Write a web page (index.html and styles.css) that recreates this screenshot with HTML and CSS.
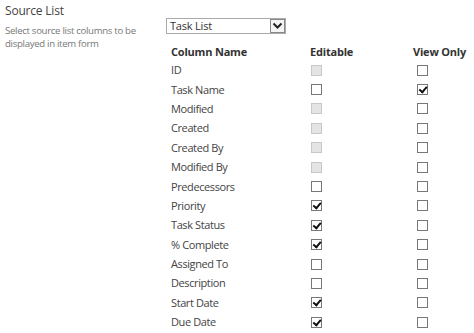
FILE: index.html
```html
<!DOCTYPE html>
<html>
<head>
<meta charset="utf-8">
<link rel="stylesheet" href="styles.css">
</head>
<body>
<div class="page">
  <div class="side">
    <div class="title">Source List</div>
    <div class="desc">Select source list columns to be displayed in item form</div>
  </div>
  <div class="main">
    <div class="select">
      <span class="select-text">Task List</span>
      <span class="select-btn">
        <svg width="11" height="8" viewBox="0 0 11 8"><path d="M1.5 1.5 L5.5 5.5 L9.5 1.5" fill="none" stroke="#222" stroke-width="2"/></svg>
      </span>
    </div>
    <table class="grid">
      <thead>
        <tr><th class="c-name">Column Name</th><th class="c-edit">Editable</th><th class="c-view">View Only</th></tr>
      </thead>
      <tbody>
        <tr><td>ID</td><td class="c-edit"><span class="cb dis"></span></td><td class="c-view"><span class="cb"></span></td></tr>
        <tr><td>Task Name</td><td class="c-edit"><span class="cb"></span></td><td class="c-view"><span class="cb on"></span></td></tr>
        <tr><td>Modified</td><td class="c-edit"><span class="cb dis"></span></td><td class="c-view"><span class="cb"></span></td></tr>
        <tr><td>Created</td><td class="c-edit"><span class="cb dis"></span></td><td class="c-view"><span class="cb"></span></td></tr>
        <tr><td>Created By</td><td class="c-edit"><span class="cb dis"></span></td><td class="c-view"><span class="cb"></span></td></tr>
        <tr><td>Modified By</td><td class="c-edit"><span class="cb dis"></span></td><td class="c-view"><span class="cb"></span></td></tr>
        <tr><td>Predecessors</td><td class="c-edit"><span class="cb"></span></td><td class="c-view"><span class="cb"></span></td></tr>
        <tr><td>Priority</td><td class="c-edit"><span class="cb on"></span></td><td class="c-view"><span class="cb"></span></td></tr>
        <tr><td>Task Status</td><td class="c-edit"><span class="cb on"></span></td><td class="c-view"><span class="cb"></span></td></tr>
        <tr><td>% Complete</td><td class="c-edit"><span class="cb on"></span></td><td class="c-view"><span class="cb"></span></td></tr>
        <tr><td>Assigned To</td><td class="c-edit"><span class="cb"></span></td><td class="c-view"><span class="cb"></span></td></tr>
        <tr><td>Description</td><td class="c-edit"><span class="cb"></span></td><td class="c-view"><span class="cb"></span></td></tr>
        <tr><td>Start Date</td><td class="c-edit"><span class="cb on"></span></td><td class="c-view"><span class="cb"></span></td></tr>
        <tr><td>Due Date</td><td class="c-edit"><span class="cb on"></span></td><td class="c-view"><span class="cb"></span></td></tr>
      </tbody>
    </table>
  </div>
</div>
</body>
</html>
```
FILE: styles.css
```css
html, body {
  margin: 0;
  padding: 0;
  background: #fff;
}
body {
  font-family: "Open Sans", "Noto Sans", sans-serif;
  color: #444;
}
.page {
  display: flex;
  padding: 0 0 0 5px;
}
.side {
  width: 161px;
  flex: none;
}
.title {
  font-size: 12px;
  line-height: 16px;
  margin-top: 3px;
  color: #444;
  letter-spacing: -0.2px;
}
.desc {
  font-size: 9.6px;
  line-height: 13px;
  color: #777;
  margin-top: 5px;
  width: 140px;
  letter-spacing: -0.3px;
}
.main {
  flex: none;
  padding-top: 18px;
}
.select {
  width: 118px;
  height: 14px;
  border: 1px solid #aaa;
  display: flex;
  align-items: center;
  justify-content: space-between;
  font-size: 11px;
  color: #333;
  letter-spacing: -0.2px;
}
.select-text {
  padding-left: 3px;
  line-height: 14px;
}
.select-btn {
  width: 13px;
  height: 12px;
  border: 1px solid #888;
  display: flex;
  align-items: center;
  justify-content: center;
  background: #f4f4f4;
}
.grid {
  border-collapse: collapse;
  margin-top: 8px;
  margin-left: 5px;
}
.grid th {
  font-weight: 700;
  font-size: 11px;
  color: #333;
  text-align: left;
  height: 18px;
  padding: 0;
  letter-spacing: -0.2px;
}
.grid td {
  font-size: 11px;
  height: 19.4px;
  padding: 0;
  letter-spacing: -0.4px;
  color: #444;
}
.c-name {
  width: 139px;
}
.grid th.c-edit {
  width: 103px;
}
.grid th.c-view {
  width: 60px;
}
td.c-edit {
  padding-left: 1px;
}
td.c-view {
  padding-left: 4px;
}
.cb {
  display: block;
  width: 9px;
  height: 9px;
  border: 1px solid #777;
  background: #fff;
  position: relative;
  margin-top: 1px;
}
.cb.dis {
  border-color: #c8c8c8;
  background: #e4e4e4;
}
.cb.on::after {
  content: "";
  position: absolute;
  left: 1px;
  top: 0px;
  width: 6px;
  height: 3px;
  border-left: 2px solid #111;
  border-bottom: 2px solid #111;
  transform: rotate(-50deg) translate(-1px, 1px);
}
```
